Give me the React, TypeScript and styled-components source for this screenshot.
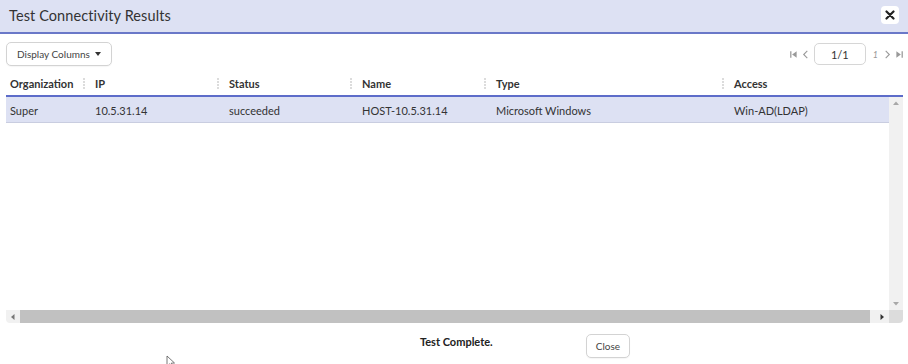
import React from 'react';
import styled, { createGlobalStyle } from 'styled-components';

const GlobalStyle = createGlobalStyle`
  html, body {
    margin: 0;
    padding: 0;
    background: #ffffff;
    font-family: Lato, "Open Sans", sans-serif;
    color: #333333;
  }
  * { box-sizing: border-box; }
`;

type Column = { key: string; label: string; width: number };

const columns: Column[] = [
  { key: 'org', label: 'Organization', width: 85 },
  { key: 'ip', label: 'IP', width: 134 },
  { key: 'status', label: 'Status', width: 133 },
  { key: 'name', label: 'Name', width: 134 },
  { key: 'type', label: 'Type', width: 238 },
  { key: 'access', label: 'Access', width: 159 },
];

const rows = [
  {
    org: 'Super',
    ip: '10.5.31.14',
    status: 'succeeded',
    name: 'HOST-10.5.31.14',
    type: 'Microsoft Windows',
    access: 'Win-AD(LDAP)',
  },
];

function App() {
  return (
    <>
      <GlobalStyle />
      <Dialog>
        <TitleBar>
          <Title>Test Connectivity Results</Title>
          <CloseX aria-label="close">
            <svg width="10" height="10" viewBox="0 0 10 10">
              <path d="M1.5 1.5 L8.5 8.5 M8.5 1.5 L1.5 8.5" stroke="#222" strokeWidth="2.2" strokeLinecap="round" />
            </svg>
          </CloseX>
        </TitleBar>

        <Body>
          <Toolbar>
            <Button>
              Display Columns
              <Caret />
            </Button>
            <Pager>
              <PagerIcon viewBox="0 0 10 10">
                <path d="M2 1.5 V8.5" stroke="#999" strokeWidth="1.4" />
                <path d="M8.5 1.5 L3.5 5 L8.5 8.5 Z" fill="#999" />
              </PagerIcon>
              <PagerIcon viewBox="0 0 10 10">
                <path d="M7 1 L3 5 L7 9" stroke="#999" strokeWidth="1.2" fill="none" />
              </PagerIcon>
              <PageInput>1/1</PageInput>
              <PageTotal>1</PageTotal>
              <PagerIcon viewBox="0 0 10 10">
                <path d="M3 1 L7 5 L3 9" stroke="#999" strokeWidth="1.2" fill="none" />
              </PagerIcon>
              <PagerIcon viewBox="0 0 10 10">
                <path d="M8 1.5 V8.5" stroke="#999" strokeWidth="1.4" />
                <path d="M1.5 1.5 L6.5 5 L1.5 8.5 Z" fill="#999" />
              </PagerIcon>
            </Pager>
          </Toolbar>

          <Grid>
            <HeaderRow>
              {columns.map((c, i) => (
                <HeaderCell key={c.key} style={{ width: c.width }}>
                  {i > 0 && <Grip />}
                  {c.label}
                </HeaderCell>
              ))}
            </HeaderRow>
            <ScrollArea>
              <RowsPane>
                {rows.map((r, idx) => (
                  <DataRow key={idx} $selected={idx === 0}>
                    {columns.map((c) => (
                      <Cell key={c.key} style={{ width: c.width }}>
                        {r[c.key as keyof typeof r]}
                      </Cell>
                    ))}
                  </DataRow>
                ))}
              </RowsPane>
              <VScroll>
                <Arrow viewBox="0 0 8 8">
                  <path d="M1 6 L4 2.5 L7 6 Z" fill="#a8a8a8" />
                </Arrow>
                <Arrow viewBox="0 0 8 8">
                  <path d="M1 2 L4 5.5 L7 2 Z" fill="#a8a8a8" />
                </Arrow>
              </VScroll>
            </ScrollArea>
            <HScrollRow>
              <HScroll>
                <Arrow viewBox="0 0 8 8">
                  <path d="M5.5 1 L2 4 L5.5 7 Z" fill="#777" />
                </Arrow>
                <Thumb />
                <Arrow viewBox="0 0 8 8">
                  <path d="M2.5 1 L6 4 L2.5 7 Z" fill="#333" />
                </Arrow>
              </HScroll>
              <Corner />
            </HScrollRow>
          </Grid>
        </Body>

        <Footer>
          <StatusText>Test Complete.</StatusText>
          <Button $small>Close</Button>
        </Footer>
      </Dialog>
      <Cursor viewBox="0 0 10 14">
        <path d="M1 1 L1 11 L3.5 8.8 L5.5 13 L7 12.3 L5.2 8.2 L8.5 8 Z" fill="#fff" stroke="#555" strokeWidth="0.8" />
      </Cursor>
    </>
  );
}

const Dialog = styled.div`
  width: 908px;
  height: 364px;
  display: flex;
  flex-direction: column;
  background: #ffffff;
  position: relative;
  overflow: hidden;
`;

const TitleBar = styled.div`
  height: 34px;
  flex-shrink: 0;
  display: flex;
  align-items: center;
  justify-content: space-between;
  padding: 0 9px 2px 9px;
  background: #dde1f3;
  border-bottom: 2px solid #6a78c8;
`;

const Title = styled.div`
  font-size: 14.5px;
  color: #333333;
  letter-spacing: 0.1px;
`;

const CloseX = styled.div`
  width: 18px;
  height: 18px;
  border-radius: 4px;
  background: #ffffff;
  display: flex;
  align-items: center;
  justify-content: center;
`;

const Body = styled.div`
  padding: 8px 4px 0 6px;
  display: flex;
  flex-direction: column;
`;

const Toolbar = styled.div`
  display: flex;
  align-items: center;
  justify-content: space-between;
  height: 24px;
`;

const Button = styled.div<{ $small?: boolean }>`
  height: 24px;
  padding: 0 ${(p) => (p.$small ? '9px' : '10px')};
  border: 1px solid #d3d3d3;
  border-radius: 5px;
  background: #ffffff;
  display: inline-flex;
  align-items: center;
  gap: 5px;
  font-size: 10px;
  color: #444444;
  box-shadow: 0 1px 1px rgba(0, 0, 0, 0.04);
`;

const Caret = styled.span`
  width: 0;
  height: 0;
  border-left: 3.5px solid transparent;
  border-right: 3.5px solid transparent;
  border-top: 4px solid #333;
`;

const Pager = styled.div`
  display: flex;
  align-items: center;
  gap: 3px;
`;

const PagerIcon = styled.svg`
  width: 9px;
  height: 11px;
`;

const PageInput = styled.div`
  width: 52px;
  height: 22px;
  margin: 0 1px 0 1px;
  border: 1px solid #d6d6d6;
  border-radius: 5px;
  display: flex;
  align-items: center;
  justify-content: center;
  font-size: 11px;
  color: #333;
`;

const PageTotal = styled.span`
  font-size: 9px;
  font-style: italic;
  color: #999;
  margin: 0 2px 0 3px;
`;

const Grid = styled.div`
  margin-top: 7px;
  display: flex;
  flex-direction: column;
  width: 897px;
`;

const HeaderRow = styled.div`
  display: flex;
  height: 24px;
  padding-bottom: 1px;
  border-bottom: 2px solid #5d6cc9;
`;

const HeaderCell = styled.div`
  position: relative;
  flex-shrink: 0;
  display: flex;
  align-items: center;
  padding-left: 4px;
  font-size: 11px;
  font-weight: 700;
  color: #333;
`;

const Grip = styled.span`
  position: absolute;
  left: -8px;
  top: 5px;
  width: 2px;
  height: 12px;
  background: repeating-linear-gradient(to bottom, #dcdcdc 0 2px, transparent 2px 3px);
`;

const ScrollArea = styled.div`
  display: flex;
  height: 213px;
`;

const RowsPane = styled.div`
  flex: 1;
`;

const DataRow = styled.div<{ $selected?: boolean }>`
  display: flex;
  height: 26px;
  padding-top: 1px;
  background: ${(p) => (p.$selected ? '#dde1f3' : '#ffffff')};
  border-bottom: 1px solid #c9cde0;
`;

const Cell = styled.div`
  flex-shrink: 0;
  display: flex;
  align-items: center;
  padding-left: 4px;
  font-size: 11px;
  color: #333;
`;

const VScroll = styled.div`
  width: 14px;
  background: #f1f1f1;
  display: flex;
  flex-direction: column;
  justify-content: space-between;
  align-items: center;
  padding: 2px 0 2px;
`;

const Arrow = styled.svg`
  width: 8px;
  height: 8px;
  flex-shrink: 0;
`;

const HScrollRow = styled.div`
  display: flex;
  height: 13px;
`;

const HScroll = styled.div`
  flex: 1;
  display: flex;
  align-items: center;
  background: #f1f1f1;
  border-bottom-left-radius: 4px;
  padding: 0 3px;
  gap: 3px;
`;

const Thumb = styled.div`
  flex: 1;
  height: 13px;
  background: #c1c1c1;
  margin-right: 5px;
`;

const Corner = styled.div`
  width: 14px;
  background: #dcdcdc;
  border-bottom-right-radius: 4px;
`;

const Footer = styled.div`
  display: flex;
  align-items: center;
  justify-content: center;
  gap: 93px;
  padding-top: 11px;
  padding-left: 142px;
`;

const StatusText = styled.div`
  font-size: 11px;
  font-weight: 700;
  color: #222;
  margin-top: -10px;
`;

const Cursor = styled.svg`
  position: absolute;
  left: 166px;
  top: 355px;
  width: 10px;
  height: 14px;
`;

export default App;
